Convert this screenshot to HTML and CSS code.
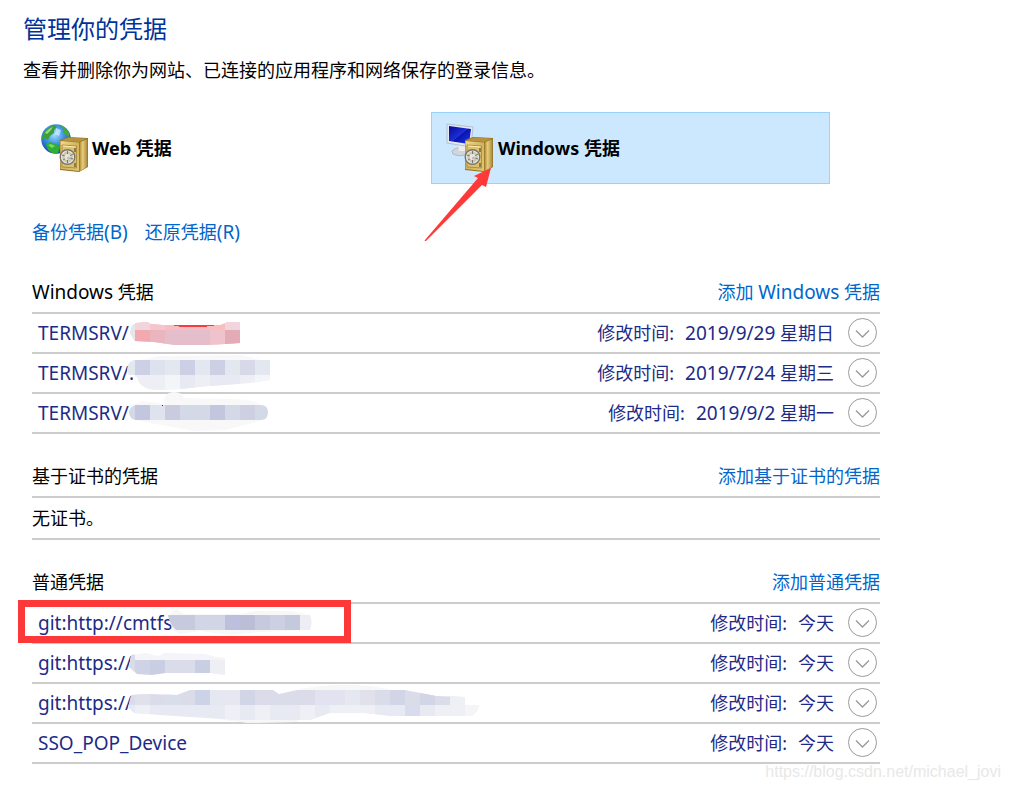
FILE: index.html
```html
<!DOCTYPE html>
<html lang="zh-CN">
<head>
<meta charset="utf-8">
<title>凭据管理器</title>
<link rel="stylesheet" href="styles.css">
</head>
<body>
<svg class="defs" aria-hidden="true">
  <defs>
    <linearGradient id="gold" x1="0" y1="0" x2="1" y2="1"><stop offset="0" stop-color="#f0dc94"/><stop offset=".5" stop-color="#d3b35c"/><stop offset="1" stop-color="#e3c973"/></linearGradient>
    <linearGradient id="side" x1="0" y1="0" x2="1" y2="0"><stop offset="0" stop-color="#b08a32"/><stop offset=".4" stop-color="#e6cd7c"/><stop offset="1" stop-color="#a98635"/></linearGradient>
    <radialGradient id="sea" cx=".45" cy=".35" r=".65"><stop offset="0" stop-color="#a5dcfa"/><stop offset=".5" stop-color="#3d92e2"/><stop offset="1" stop-color="#1447a8"/></radialGradient>
    <linearGradient id="screen" x1="0" y1="0" x2="1" y2="1"><stop offset="0" stop-color="#0509a0"/><stop offset=".5" stop-color="#1f2fd0"/><stop offset=".52" stop-color="#0a12b4"/><stop offset="1" stop-color="#1b3ce0"/></linearGradient>
    <symbol id="safe" viewBox="0 0 30 37">
      <path d="M1 4 9 1 29 2 29 31 20 36 1 34Z" fill="#8f722d"/>
      <path d="M2 4.500 9.500 1.500 28 2.500 20 6Z" fill="#b8933f"/>
      <path d="M1.500 5 20 6.500 20 35 1.500 33Z" fill="url(#gold)"/>
      <path d="M20.500 6.500 28.500 3 28.500 30.500 20.500 35.500Z" fill="url(#side)"/>
      <path d="M3 9 17.500 10 17.500 32 3 31Z" fill="#dcc06c" stroke="#b08f40"/>
      <path d="M4 10 16.500 11" stroke="#fff0b0"/>
      <path d="M16 12v4M16 27v4" stroke="#8b7b4f" stroke-width="2"/>
      <circle cx="8.500" cy="21" r="7" fill="#cfc8a8" stroke="#77756c" stroke-width="2"/>
      <circle cx="8.500" cy="21" r="6" fill="none" stroke="#e6e6e2" stroke-width="1.200"/>
      <path d="M8.500 15v12M3 19l11 4M4 24l10-6" stroke="#77766f"/>
      <circle cx="8.500" cy="21" r="3" fill="#e6e6e3"/>
      <circle cx="9.500" cy="22" r="1.500" fill="#b9bbbb"/>
    </symbol>
    <symbol id="chevron" viewBox="0 0 29 29">
      <circle cx="14.500" cy="14.500" r="14" fill="#fff" stroke="#999"/>
      <path d="M8 12.500 14.500 19 21 12.500" fill="none" stroke="#999" stroke-width="1.300"/>
    </symbol>
  </defs>
</svg>
<main class="page">
  <header class="intro">
    <h1 class="title">管理你的凭据</h1>
    <p class="summary">查看并删除你为网站、已连接的应用程序和网络保存的登录信息。</p>
  </header>

  <nav class="tiles">
    <button class="tile" type="button">
      <svg class="tile-icon" viewBox="0 0 48 48" aria-hidden="true">
        <circle cx="15" cy="15" r="14.800" fill="url(#sea)"/>
        <path d="M3 8Q8 2 14 1L16 3 13 6 13 9 9 12 7 16 4 14 1 16Q1 11 3 8Z" fill="#3d9f3a"/>
        <path d="M4 9Q8 4 12 3L9 7 6 10Z" fill="#9bd98a"/>
        <path d="M19 1Q25 3 28 9L28 13 25 11 22 9 23 6Z" fill="#45a93c"/>
        <path d="M5 20 9 18 15 20 19 23 17 29 11 29 7 26Z" fill="#2fae35"/>
        <path d="M7 21 10 20 14 22 11 24Z" fill="#7dd765"/>
        <path d="M15 4 20 6 18 12 14 10Z" fill="#e2f8ff" opacity=".6"/>
        <use href="#safe" x="18" y="12" width="30" height="37"/>
      </svg>
      <span><span class="latin">Web</span> 凭据</span>
    </button>
    <button class="tile tile-active" type="button">
      <svg class="tile-icon" viewBox="0 0 48 48" aria-hidden="true">
        <path d="M5 27Q10 22 19 24L21 29Q14 34 6 30Z" fill="#cfd6dc" stroke="#b0b9c2"/>
        <path d="M11 20 18 21 18 27 12 27Z" fill="#e9edf0"/>
        <path d="M0 0 26 3 24 23 0 19Z" fill="#e3eaf2" stroke="#b4c0ce"/>
        <path d="M2 2 24 5 22 20 2 17Z" fill="url(#screen)"/>
        <use href="#safe" x="17" y="12" width="30" height="37"/>
      </svg>
      <span><span class="latin">Windows</span> 凭据</span>
      <svg class="arrow" viewBox="0 0 68 74" aria-hidden="true"><path d="M67 1 50 9 54 11 1 73Q0 75 2 74L58 18 62 20Z" fill="#ff3838"/></svg>
    </button>
  </nav>

  <div class="actions"><a href="#backup">备份凭据<span class="latin">(B)</span></a><a href="#restore">还原凭据<span class="latin">(R)</span></a></div>

  <section class="group">
    <div class="head"><h2><span class="latin">Windows</span> 凭据</h2><a href="#add-windows">添加 <span class="latin">Windows</span> 凭据</a></div>
    <ul class="list">
      <li class="row">
        <span class="name latin">TERMSRV/</span>
        <svg class="smudge" viewBox="32 314 500 40" aria-hidden="true">
          <clipPath id="c1"><path d="M130 333 132 326 136 323 147 322 151 324 163 325 220 325 228 322 240 322V343L226 344 206 345 175 345 154 342 135 341Z"/></clipPath>
          <g clip-path="url(#c1)">
            <path d="M130 314h110v36H130Z" fill="#fbbcc0"/>
            <path d="M130 314h5v36h-5Z" fill="#e6e6ee"/>
            <path d="M135 314h15v16h-15ZM225 314h15v16h-15Z" fill="#f0d6dc"/>
            <path d="M150 314h15v16h-15Z" fill="#f4c6cb"/>
            <path d="M135 330h15v16h-15Z" fill="#f2a9af"/>
            <path d="M150 330h15v16h-15Z" fill="#eab5be"/>
            <path d="M165 330h45v16h-45Z" fill="#e4bfcb"/>
            <path d="M210 330h15v16h-15Z" fill="#efc3cb"/>
            <path d="M225 330h15v16h-15Z" fill="#e2abb6"/>
            <path d="M174 325h40v1h-7v1h-28v-1h-5Z" fill="#f43d42"/>
          </g>
        </svg>
        <span class="date"><span>修改时间:</span><span><span class="latin">2019/9/29</span> 星期日</span></span>
        <button class="expand" type="button" aria-label="展开"><svg><use href="#chevron"/></svg></button>
      </li>
      <li class="row">
        <span class="name latin">TERMSRV/.</span>
        <svg class="smudge" viewBox="32 354 500 40" aria-hidden="true">
          <path d="M135 361 160 356 242 355 260 360Z" fill="#f8f8fa"/>
          <clipPath id="c2"><path d="M127 370Q128 360 135 360H270V380L250 383 210 386 180 389 160 390Q140 391 137 377L129 375Z"/></clipPath>
          <g clip-path="url(#c2)">
            <path d="M125 355h145v20H125Z" fill="#e3e7f0"/>
            <path d="M135 355h15v20h-15ZM180 355h15v20h-15ZM210 355h15v20h-15Z" fill="#cdd0e5"/>
            <path d="M150 355h15v20h-15Z" fill="#dce2ee"/>
            <path d="M240 355h15v20h-15Z" fill="#d7d9e9"/>
            <path d="M135 375h135v16H135Z" fill="#eeeff5"/>
            <path d="M165 375h15v16h-15ZM255 375h15v16h-15Z" fill="#f4f5f9"/>
            <path d="M180 375h15v16h-15ZM210 375h30v16h-30Z" fill="#e7eaf2"/>
          </g>
        </svg>
        <span class="date"><span>修改时间:</span><span><span class="latin">2019/7/24</span> 星期三</span></span>
        <button class="expand" type="button" aria-label="展开"><svg><use href="#chevron"/></svg></button>
      </li>
      <li class="row">
        <span class="name latin">TERMSRV/</span>
        <svg class="smudge" viewBox="32 394 500 40" aria-hidden="true">
          <path d="M132 405 142 401 164 404Q164 392 174 392 182 392 184 398L230 399Q256 399 260 405V421L225 430 195 431 150 423 132 419Z" fill="#f8f8f9"/>
          <clipPath id="c3"><path d="M136 405H262Q268 406 268 412 268 419 262 420H136Q129 419 129 412 129 407 136 405Z"/></clipPath>
          <g clip-path="url(#c3)">
            <path d="M125 400h145v24H125Z" fill="#d4d9e8"/>
            <path d="M135 400h15v24h-15ZM210 400h15v24h-15Z" fill="#c2c6de"/>
            <path d="M150 400h15v24h-15Z" fill="#dee3ee"/>
            <path d="M165 400h15v24h-15Z" fill="#cacbdf"/>
            <path d="M240 400h15v24h-15Z" fill="#ced0e2"/>
          </g>
          <path d="M162 405h1v1h-1Z" fill="#1c2b88"/>
        </svg>
        <span class="date"><span>修改时间:</span><span><span class="latin">2019/9/2</span> 星期一</span></span>
        <button class="expand" type="button" aria-label="展开"><svg><use href="#chevron"/></svg></button>
      </li>
    </ul>
  </section>

  <section class="group">
    <div class="head"><h2>基于证书的凭据</h2><a href="#add-cert">添加基于证书的凭据</a></div>
    <p class="empty">无证书。</p>
  </section>

  <section class="group">
    <div class="head"><h2>普通凭据</h2><a href="#add-generic">添加普通凭据</a></div>
    <ul class="list">
      <li class="row">
        <span class="name latin">git:http://cmtfs.</span>
        <svg class="smudge" viewBox="32 604 500 40" aria-hidden="true">
          <path d="M170 614 176 609 184 614 240 614 255 611 290 611 305 614 305 630 260 632 230 635 200 631 180 634 172 630Z" fill="#f7f7f8"/>
          <clipPath id="c4"><path d="M168 615H310Q313 622 310 630H176Q169 624 168 615Z"/></clipPath>
          <g clip-path="url(#c4)">
            <path d="M165 610h35v24h-35ZM255 610h30v24h-30Z" fill="#c7cadf"/>
            <path d="M195 610h30v24h-30Z" fill="#d2d5e5"/>
            <path d="M225 610h30v24h-30Z" fill="#bdc0dc"/>
            <path d="M240 610h15v24h-15Z" fill="#bcbdd7"/>
            <path d="M270 610h15v24h-15Z" fill="#ccd0e2"/>
            <path d="M285 610h15v24h-15Z" fill="#c5c9dd"/>
            <path d="M300 610h15v24h-15Z" fill="#ededf3"/>
          </g>
        </svg>
        <span class="marker"></span>
        <span class="date"><span>修改时间:</span><span>今天</span></span>
        <button class="expand" type="button" aria-label="展开"><svg><use href="#chevron"/></svg></button>
      </li>
      <li class="row">
        <span class="name latin">git:https://</span>
        <svg class="smudge" viewBox="32 644 500 40" aria-hidden="true">
          <clipPath id="c5"><path d="M131 655 146 653 158 656 165 653 205 654 216 657 225 658V675L211 673H165L152 675 137 674 129 667Z"/></clipPath>
          <g clip-path="url(#c5)">
            <path d="M125 650h100v30H125Z" fill="#f4f4f9"/>
            <path d="M125 650h10v30h-10ZM165 660h30v20h-30Z" fill="#dadce9"/>
            <path d="M135 660h15v20h-15Z" fill="#ced4e6"/>
            <path d="M150 660h15v20h-15ZM195 660h15v20h-15Z" fill="#cacee2"/>
            <path d="M210 660h15v20h-15Z" fill="#eeeff5"/>
          </g>
        </svg>
        <span class="date"><span>修改时间:</span><span>今天</span></span>
        <button class="expand" type="button" aria-label="展开"><svg><use href="#chevron"/></svg></button>
      </li>
      <li class="row">
        <span class="name latin">git:https://</span>
        <svg class="smudge" viewBox="32 684 500 40" aria-hidden="true">
          <path d="M300 689Q350 680 392 690L300 695ZM210 718 300 719 296 722 248 723Z" fill="#f7f7f8"/>
          <clipPath id="c6"><path d="M131 695 150 694 177 695 190 690 273 690 279 694 297 690 405 690 436 696 465 697 465 705 479 705Q478 714 470 716L390 716 365 713H330L310 720H240L190 717 160 715 134 713 128 707Z"/></clipPath>
          <g clip-path="url(#c6)">
            <path d="M125 685h340v20H125Z" fill="#dadce9"/>
            <path d="M125 705h355v20H125Z" fill="#e7e9f3"/>
            <path d="M135 685h15v20h-15ZM360 685h15v20h-15Z" fill="#e0e1eb"/>
            <path d="M165 685h15v20h-15Z" fill="#d8dfeb"/>
            <path d="M195 685h15v20h-15Z" fill="#ccd3e7"/>
            <path d="M210 685h30v20h-30ZM345 685h15v20h-15Z" fill="#e5e8f1"/>
            <path d="M240 685h15v20h-15ZM390 685h15v20h-15ZM420 685h15v20h-15Z" fill="#d2d5e6"/>
            <path d="M315 685h30v20h-30Z" fill="#e1e4f0"/>
            <path d="M450 685h15v20h-15ZM135 705h15v20h-15ZM225 705h15v20h-15ZM255 705h15v20h-15ZM300 705h15v20h-15ZM330 705h45v20h-45ZM435 705h30v20h-30Z" fill="#eff0f6"/>
            <path d="M405 705h15v20h-15Z" fill="#d8dcec"/>
            <path d="M465 705h15v20h-15Z" fill="#f5f5f7"/>
          </g>
        </svg>
        <span class="date"><span>修改时间:</span><span>今天</span></span>
        <button class="expand" type="button" aria-label="展开"><svg><use href="#chevron"/></svg></button>
      </li>
      <li class="row">
        <span class="name latin">SSO_POP_Device</span>
        <span class="date"><span>修改时间:</span><span>今天</span></span>
        <button class="expand" type="button" aria-label="展开"><svg><use href="#chevron"/></svg></button>
      </li>
    </ul>
  </section>
</main>
<footer class="watermark">https://blog.csdn.net/michael_jovi</footer>
</body>
</html>
```

FILE: styles.css
```css
* { box-sizing: border-box; }
body {
  margin: 0;
  background: #fff;
  color: #000;
  font: 18px/24px "Noto Sans", "Noto Sans CJK SC", sans-serif;
}
h1, h2, p, ul { margin: 0; padding: 0; font-size: 18px; font-weight: 400; }
a { color: #0066cc; text-decoration: none; }
button { font: inherit; cursor: pointer; }
.latin { font-size: 19px; line-height: 22px; }
.defs { position: absolute; width: 0; height: 0; }
.page { padding: 12px 129px 0 32px; }
.intro { margin-left: -9px; }
.title { color: #003399; font-size: 24px; line-height: 34px; }
.summary { margin-top: 12px; }
.tiles {
  display: grid;
  grid-template-columns: 1fr 1fr;
  gap: 7px;
  margin: 30px 50px 0 -7px;
}
.tile {
  position: relative;
  display: flex;
  align-items: center;
  gap: 3px;
  height: 72px;
  padding: 0 15px;
  border: 1px solid transparent;
  background: none;
  color: #000;
  font-weight: 700;
  text-align: left;
}
.tile .latin { font-size: 18px; }
.tile-active { background: #cce8ff; border-color: #99d1ff; }
.tile-icon { width: 48px; height: 48px; overflow: visible; }
.arrow { position: absolute; left: -8px; top: 54px; width: 68px; height: 74px; }
.actions { display: flex; gap: 17px; margin: 36px 0 28px; }
.group { margin-bottom: 22px; }
.group:last-child { margin-bottom: 0; }
.head {
  display: flex;
  justify-content: space-between;
  align-items: center;
  height: 42px;
  border-bottom: 2px solid #ccc;
}
.list { list-style: none; }
.row {
  position: relative;
  display: flex;
  align-items: center;
  height: 40px;
  padding: 0 3px 1px 6px;
  border-bottom: 2px solid #ccc;
  color: #1c2b88;
}
.name { flex: 1; }
.smudge { position: absolute; left: 0; top: 0; width: 500px; height: 40px; overflow: visible; }
.marker {
  position: absolute;
  left: -14px;
  top: -4px;
  width: 333px;
  height: 43px;
  border: 7px solid #fd3838;
}
.date { display: flex; gap: 11px; margin-right: 14px; }
.expand { width: 29px; height: 29px; padding: 0; border: 0; background: none; }
.expand svg { display: block; width: 29px; height: 29px; }
.empty { padding: 8px 0; border-bottom: 2px solid #ccc; }
.watermark {
  padding-right: 8px;
  color: #e8e8e8;
  font: 16px/16px "Liberation Sans", sans-serif;
  text-align: right;
}
```
